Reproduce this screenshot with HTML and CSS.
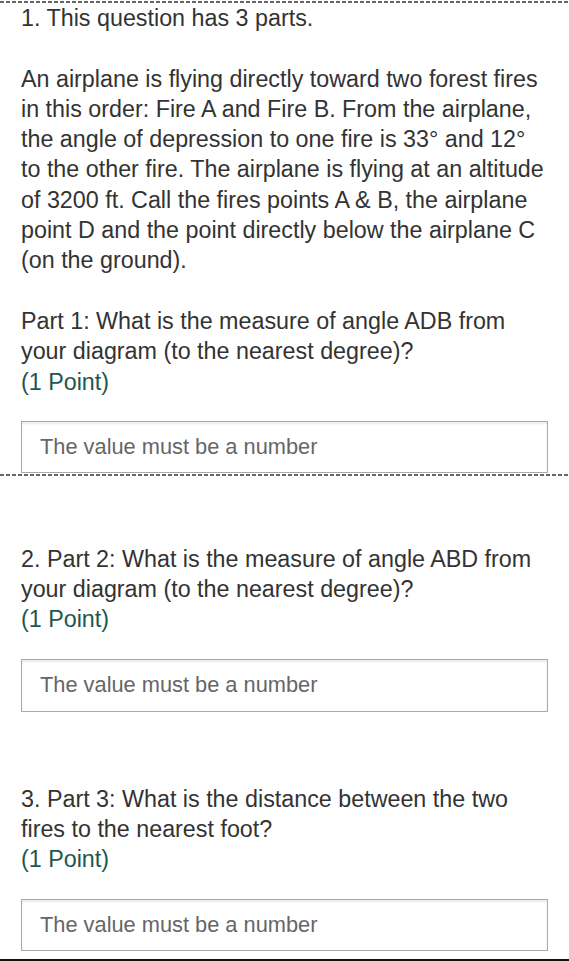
FILE: index.html
```html
<!DOCTYPE html>
<html lang="en">
<head>
<meta charset="utf-8">
<title>Quiz</title>
<link rel="stylesheet" href="styles.css">
</head>
<body>
<div class="rule"></div>
<section class="question first">
  <p class="line">1. This question has 3 parts.</p>
  <p class="para">An airplane is flying directly toward two forest fires<br>in this order: Fire A and Fire B. From the airplane,<br>the angle of depression to one fire is 33° and 12°<br>to the other fire. The airplane is flying at an altitude<br>of 3200 ft. Call the fires points A &amp; B, the airplane<br>point D and the point directly below the airplane C<br>(on the ground).</p>
  <p class="line">Part 1: What is the measure of angle ADB from<br>your diagram (to the nearest degree)?</p>
  <p class="points">(1 Point)</p>
  <div class="answer"><input class="input" type="text" placeholder="The value must be a number"></div>
</section>
<div class="rule"></div>
<section class="question second">
  <p class="line">2. Part 2: What is the measure of angle ABD from<br>your diagram (to the nearest degree)?</p>
  <p class="points">(1 Point)</p>
  <div class="answer"><input class="input tall" type="text" placeholder="The value must be a number"></div>
</section>
<section class="question third">
  <p class="line">3. Part 3: What is the distance between the two<br>fires to the nearest foot?</p>
  <p class="points">(1 Point)</p>
  <div class="answer"><input class="input" type="text" placeholder="The value must be a number"></div>
</section>
<div class="bottom"></div>
</body>
</html>
```

FILE: styles.css
```css
html, body {
  margin: 0;
  padding: 0;
  background: #ffffff;
}
body {
  font-family: "Liberation Sans", Arial, sans-serif;
  font-size: 23.3px;
  line-height: 30.3px;
  color: #333333;
  width: 569px;
  height: 961px;
  display: flex;
  flex-direction: column;
  overflow: hidden;
}
.rule {
  height: 2px;
  margin-top: 1px;
  background: repeating-linear-gradient(90deg, #666 0 4px, transparent 4px 6px);
  flex: none;
}
.question {
  padding: 0 21px;
  display: flex;
  flex-direction: column;
}
.question.second {
  padding-top: 68px;
}
.question.third {
  padding-top: 72px;
}
.question p {
  margin: 0;
  white-space: nowrap;
}
.para {
  margin: 30.3px 0 !important;
}
.points {
  color: #1e5650;
}
.answer {
  margin-top: 24px;
}
.input {
  box-sizing: border-box;
  display: block;
  width: 527px;
  height: 52px;
  margin: 0;
  border: 1px solid #a9a9a9;
  box-shadow: inset 0 2px 2px rgba(0,0,0,0.08);
  padding: 0 0 0 18px;
  font-family: "Liberation Sans", Arial, sans-serif;
  font-size: 21.8px;
  color: #333;
  background: #fff;
  outline: none;
}
.input.tall {
  height: 53px;
}
.input::placeholder {
  color: #666666;
  opacity: 1;
}
.bottom {
  margin-top: auto;
  height: 2px;
  background: #111;
  flex: none;
}
```
